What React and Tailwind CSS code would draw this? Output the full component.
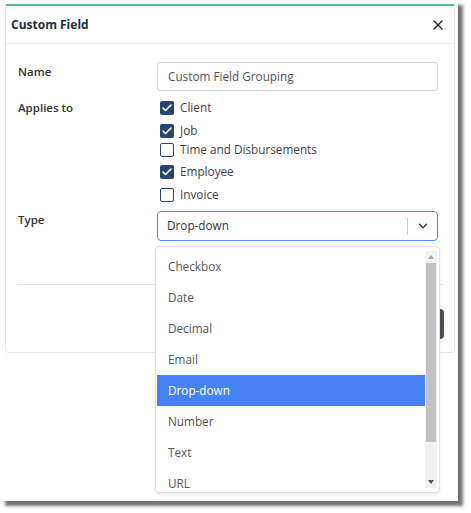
import { X, ChevronDown, Check } from "lucide-react";

const types = ["Checkbox", "Date", "Decimal", "Email", "Drop-down", "Number", "Text", "URL", "Yes/No"];

const appliesTo = [
  { label: "Client", checked: true, mt: "mt-0" },
  { label: "Job", checked: true, mt: "mt-[4px]" },
  { label: "Time and Disbursements", checked: false, mt: "mt-0" },
  { label: "Employee", checked: true, mt: "mt-[3px]" },
  { label: "Invoice", checked: false, mt: "mt-[4px]" },
];

function Box({ checked }) {
  if (checked) {
    return (
      <span className="w-[14px] h-[14px] rounded-[2px] bg-[#264670] flex items-center justify-center">
        <Check size={12} strokeWidth={3.2} className="text-white" />
      </span>
    );
  }
  return <span className="w-[14px] h-[14px] rounded-[2px] border-[1.5px] border-[#264670] bg-white" />;
}

function Cursor() {
  return (
    <svg className="absolute left-[239px] top-[395px]" width="12" height="18" viewBox="0 0 12 18">
      <path d="M0.5 0.5 L0.5 14 L3.6 11 L6 16.5 L8 15.6 L5.7 10.3 L10 10.3 Z" fill="#fff" stroke="#000" strokeWidth="1" strokeLinejoin="round" />
    </svg>
  );
}

export default function App() {
  return (
    <div className="relative w-[471px] h-[513px] bg-white text-[11.75px]" style={{ fontFamily: '"Open Sans", "Noto Sans", sans-serif' }}>
      {/* screenshot frame */}
      <div className="w-[458px] h-[501px] bg-white shadow-[5px_5px_3px_rgba(0,0,0,0.55)] pt-[4px] pl-[5px]">
        {/* modal */}
        <div className="w-[450px] bg-white border border-[#e6e6e6] border-t-0 rounded-b-[4px] flex flex-col">
          <div className="h-[2px] bg-[#5cb88a]" />
          <div className="h-[38px] flex items-center justify-between pl-[5px] pr-[8px] border-b border-[#eeeeee]">
            <span className="font-bold text-[12px] text-[#1f2f40]">Custom Field</span>
            <X size={16} strokeWidth={1.8} className="text-[#222]" />
          </div>

          <div className="px-[12px] pt-[18px]">
            <div className="flex">
              <div className="w-[139px] pt-px font-semibold text-[11.5px] text-[#333]">Name</div>
              <div className="w-[281px] h-[29px] border border-[#d9d9d9] rounded-[3px] flex items-center pl-[10px] text-[#555]">
                Custom Field Grouping
              </div>
            </div>

            <div className="flex mt-[7px]">
              <div className="w-[139px] pt-[1px] font-semibold text-[11.5px] text-[#333]">Applies to</div>
              <div className="flex flex-col pl-[3px]">
                {appliesTo.map((a) => (
                  <div key={a.label} className={"h-[19px] flex items-center gap-[6px] text-[#444] " + a.mt}>
                    <Box checked={a.checked} />
                    <span>{a.label}</span>
                  </div>
                ))}
              </div>
            </div>

            <div className="flex mt-[7px]">
              <div className="w-[139px] font-semibold text-[11.5px] text-[#333]">Type</div>
              <div className="relative">
                <div className="w-[281px] h-[30px] border-[1.5px] border-[#4d8ef7] rounded-[4px] flex items-center text-[#333]">
                  <span className="flex-1 pl-[9px]">Drop-down</span>
                  <span className="w-px h-[17px] bg-[#cccccc]" />
                  <span className="w-[29px] flex justify-center">
                    <ChevronDown size={14} strokeWidth={2.6} className="text-[#444]" />
                  </span>
                </div>

                {/* open menu */}
                <div className="absolute z-10 left-[-2px] top-[35px] w-[285px] h-[247px] bg-white border border-[#e2e2e2] rounded-[4px] shadow-[0_2px_4px_rgba(0,0,0,0.08)] flex pt-[4px] pb-[4px] pl-px pr-[2px]">
                  <div className="flex-1 overflow-hidden">
                    {types.map((t) => (
                      <div
                        key={t}
                        className={
                          t === "Drop-down"
                            ? "h-[31px] flex items-center pl-[11px] bg-[#4682f5] text-white"
                            : "h-[31px] flex items-center pl-[11px] text-[#555]"
                        }
                      >
                        {t}
                      </div>
                    ))}
                  </div>
                  <div className="w-[12px] bg-[#f1f1f1] flex flex-col items-center">
                    <div className="h-[12px] flex items-center justify-center">
                      <span className="w-0 h-0 border-l-[3px] border-r-[3px] border-b-[4px] border-l-transparent border-r-transparent border-b-[#a3a3a3]" />
                    </div>
                    <div className="w-[10px] h-[179px] bg-[#c1c1c1]" />
                    <div className="flex-1" />
                    <div className="h-[12px] flex items-center justify-center">
                      <span className="w-0 h-0 border-l-[3px] border-r-[3px] border-t-[4px] border-l-transparent border-r-transparent border-t-[#505050]" />
                    </div>
                  </div>
                </div>
              </div>
            </div>
          </div>

          <div className="mx-[11px] mt-[43px] border-t border-[#e6e6e6] pt-[24px] pb-[13px] flex justify-end">
            <button className="h-[30px] px-[16px] rounded-[4px] bg-[#4b5057] text-white mr-[-1px]">Save</button>
          </div>
        </div>
      </div>
      <Cursor />
    </div>
  );
}
